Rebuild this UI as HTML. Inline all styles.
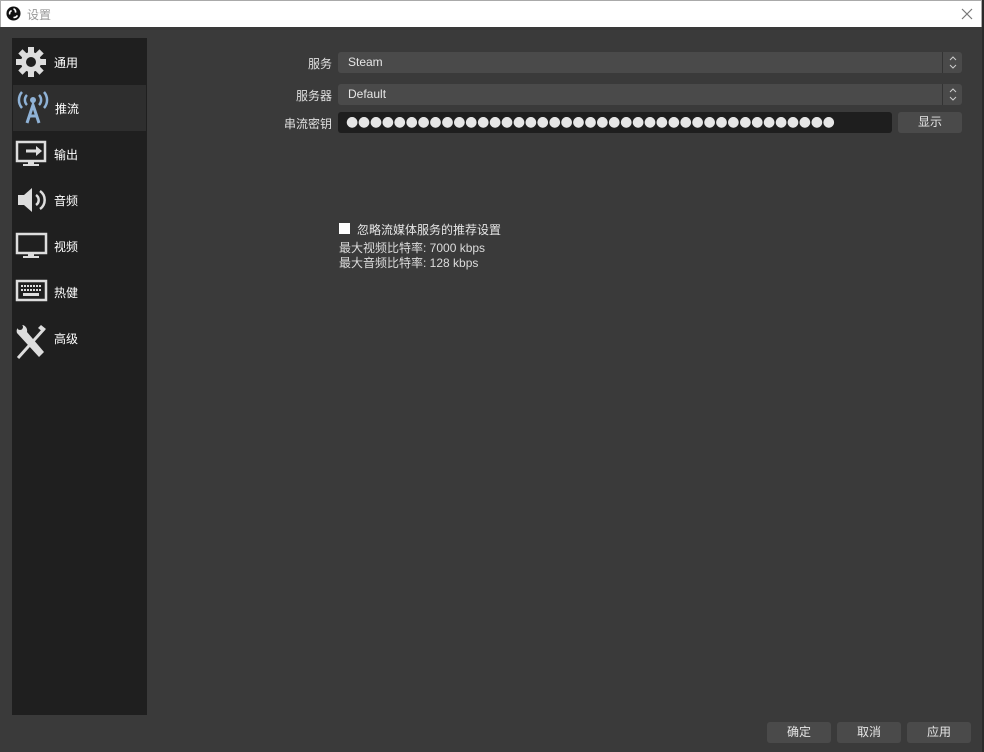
<!DOCTYPE html>
<html><head><meta charset="utf-8"><style>
*{margin:0;padding:0;box-sizing:border-box}
body{width:984px;height:752px;background:#3a3a3a;position:relative;overflow:hidden;font-family:"Liberation Sans","Noto Sans CJK SC",sans-serif;font-size:12px;color:#dedede}
.title{position:absolute;left:0;top:0;width:982px;height:27px;background:#fff;border:1px solid #aaa;border-bottom:none}
.title span{position:absolute;left:26px;top:5px;color:#999;font-size:12px}
.side{position:absolute;left:12px;top:38px;width:135px;height:677px;background:#1f1f1f}
.item{position:absolute;left:0;width:135px;height:46px}
.item .t{position:absolute;left:42px;top:15px;color:#fff;font-size:12px}
.sel{background:#2e2e2e;left:1px;width:133px}
.item svg{position:absolute;left:3px;top:6px}
.lbl{position:absolute;right:652px;color:#e0e0e0;text-align:right}
.combo{position:absolute;left:338px;width:624px;height:21px;background:#4a4a4a;border-radius:3px}
.combo span{position:absolute;left:10px;top:3px;color:#e6e6e6}
.combo .ar{position:absolute;right:0;top:0;width:20px;height:21px;border-left:1px solid #333}
.btn{position:absolute;height:21px;background:#4a4a4a;border-radius:3px;text-align:center;line-height:21px;color:#e6e6e6}
</style></head><body>
<div class="title"><svg style="position:absolute;left:5px;top:5px" width="15" height="15" viewBox="0 0 16 16"><circle cx="8" cy="8" r="7.5" fill="#111"/><path d="M8 3a3 3 0 0 1 2 4M12 10a3 3 0 0 1-4 2M4 9a3 3 0 0 1 2-4" stroke="#fff" stroke-width="1.8" fill="none"/></svg><span>设置</span>
<svg style="position:absolute;left:960px;top:7px" width="12" height="12"><path d="M1 1L11 11M11 1L1 11" stroke="#777" stroke-width="1.2"/></svg></div>
<div style="position:absolute;left:982px;top:0;width:2px;height:752px;background:#2a2a2a"></div>
<div class="side">
<div class="item" style="top:1px"><svg width="34" height="34" viewBox="0 0 34 34"><g fill="#ddd"><circle cx="16" cy="17" r="10"/><rect x="13" y="2" width="6" height="30"/><rect x="1" y="14" width="30" height="6"/><rect x="13" y="2" width="6" height="30" transform="rotate(45 16 17)"/><rect x="13" y="2" width="6" height="30" transform="rotate(-45 16 17)"/></g><circle cx="16" cy="17" r="5" fill="#1f1f1f"/></svg><span class="t">通用</span></div>
<div class="item sel" style="top:47px"><svg width="34" height="34" viewBox="0 0 34 34" fill="none" stroke="#8fb2d6" stroke-width="2.5"><circle cx="17" cy="9" r="3" fill="#8fb2d6" stroke="none"/><path d="M11 4a7 7 0 0 0 0 10M23 4a7 7 0 0 1 0 10M6 1a12 12 0 0 0 0 16M28 1a12 12 0 0 1 0 16"/><path d="M11 32L17 14L23 32M13 25h8" stroke-width="3"/></svg><span class="t">推流</span></div>
<div class="item" style="top:93px"><svg width="34" height="34" viewBox="0 0 34 34"><path d="M2 5h28v19H2z" fill="none" stroke="#ddd" stroke-width="2.5"/><path d="M13 24h6v3h5v2H8v-2h5z" fill="#ddd"/><path d="M11 14h12" stroke="#ddd" stroke-width="3"/><path d="M21 9l6 5-6 5z" fill="#ddd"/></svg><span class="t">输出</span></div>
<div class="item" style="top:139px"><svg width="34" height="34" viewBox="0 0 34 34"><path d="M3 12h6l8-7v24l-8-7H3z" fill="#ddd"/><path d="M21 12a6 6 0 0 1 0 10M25 8a11 11 0 0 1 0 18" stroke="#ddd" stroke-width="2.5" fill="none"/></svg><span class="t">音频</span></div>
<div class="item" style="top:185px"><svg width="34" height="34" viewBox="0 0 34 34"><path d="M2 5h29v19H2z" fill="none" stroke="#ddd" stroke-width="2.5"/><path d="M13 24h6v3h5v2H8v-2h5z" fill="#ddd"/></svg><span class="t">视频</span></div>
<div class="item" style="top:231px"><svg width="34" height="34" viewBox="0 0 34 34"><rect x="2" y="6" width="29" height="19" fill="none" stroke="#ddd" stroke-width="2.5"/><g fill="#ddd"><rect x="6" y="10" width="20" height="2"/><rect x="6" y="14" width="20" height="2"/><rect x="8" y="18" width="16" height="3"/></g><g stroke="#1f1f1f" stroke-width="1"><path d="M8.5 9v8M11.5 9v8M14.5 9v8M17.5 9v8M20.5 9v8M23.5 9v8"/></g></svg><span class="t">热健</span></div>
<div class="item" style="top:277px"><svg width="34" height="40" viewBox="0 0 34 40"><path d="M3 37L29 8" stroke="#ddd" stroke-width="3"/><path d="M26 4l5 4-3 3-5-4z" fill="#ddd"/><path d="M8 4a6 6 0 0 0-6 8l22 24 5-5L12 11a6 6 0 0 0-4-7z" fill="#ddd"/><circle cx="5" cy="6" r="3" fill="#1f1f1f"/></svg><span class="t">高级</span></div>
</div>
<div class="lbl" style="top:55px">服务</div>
<div class="combo" style="top:52px"><span>Steam</span><div class="ar"><svg width="20" height="21"><path d="M7 8l3-3 3 3M7 13l3 3 3-3" stroke="#ccc" fill="none"/></svg></div></div>
<div class="lbl" style="top:87px">服务器</div>
<div class="combo" style="top:84px"><span>Default</span><div class="ar"><svg width="20" height="21"><path d="M7 8l3-3 3 3M7 13l3 3 3-3" stroke="#ccc" fill="none"/></svg></div></div>
<div class="lbl" style="top:115px">串流密钥</div>
<div style="position:absolute;left:338px;top:112px;width:554px;height:21px;background:#1e1e1e;border-radius:3px;color:#e6e6e6;font-size:14px;line-height:21px;padding-left:8px;letter-spacing:-0.3px;font-family:'DejaVu Sans',sans-serif;white-space:nowrap;overflow:hidden">●●●●●●●●●●●●●●●●●●●●●●●●●●●●●●●●●●●●●●●●●</div>
<div class="btn" style="left:898px;top:112px;width:64px">显示</div>
<div style="position:absolute;left:339px;top:223px;width:11px;height:11px;background:#fff"></div>
<div style="position:absolute;left:357px;top:221px;color:#e6e6e6">忽略流媒体服务的推荐设置</div>
<div style="position:absolute;left:339px;top:241px;line-height:15px;color:#dcdcdc">最大视频比特率: 7000 kbps<br>最大音频比特率: 128 kbps</div>
<div class="btn" style="left:767px;top:722px;width:64px">确定</div>
<div class="btn" style="left:837px;top:722px;width:64px">取消</div>
<div class="btn" style="left:907px;top:722px;width:64px">应用</div>
</body></html>
